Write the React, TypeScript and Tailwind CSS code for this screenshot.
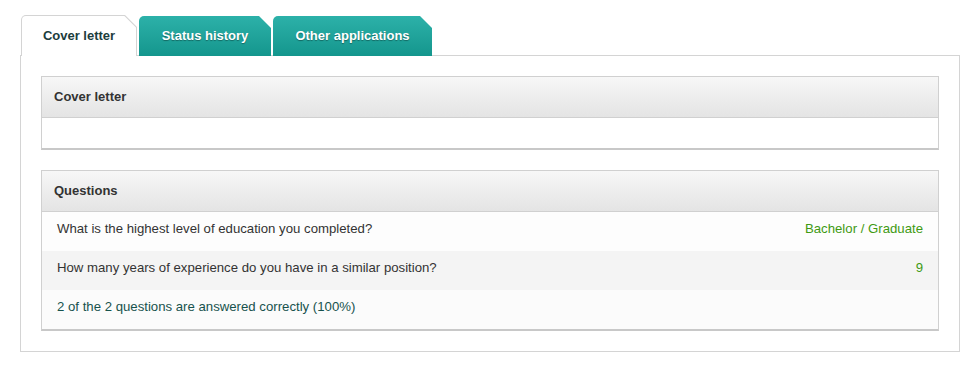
import React from 'react'

const font = { fontFamily: '"Liberation Sans", Arial, Helvetica, sans-serif' }

const tabs = [
  { label: 'Cover letter', w: 'w-[116px]', active: true },
  { label: 'Status history', w: 'w-[132px]', active: false },
  { label: 'Other applications', w: 'w-[159px]', active: false },
]

const clip = '[clip-path:polygon(0_0,calc(100%-12px)_0,100%_12px,100%_100%,0_100%)]'

function Tab({ label, w, active }: { label: string; w: string; active: boolean }) {
  if (active) {
    return (
      <div className={`${w} h-[41px] relative z-10 rounded-tl-[5px] bg-[#d4d4d4] ${clip} p-px pb-0`}>
        <div className="h-full rounded-tl-[4px] bg-white [clip-path:polygon(0_0,calc(100%-11.6px)_0,100%_11.6px,100%_100%,0_100%)] flex items-center justify-center text-[13px] font-bold text-[#1c3d3d]">
          {label}
        </div>
      </div>
    )
  }
  return (
    <div
      className={`${w} h-[40px] rounded-tl-[5px] ${clip} bg-gradient-to-b from-[#2cb1a9] to-[#13968d] flex items-center justify-center text-[13px] font-bold text-white [text-shadow:0_1px_1px_rgba(0,0,0,0.35)]`}
    >
      {label}
    </div>
  )
}

function BoxHeader({ title }: { title: string }) {
  return (
    <div className="h-[41px] flex items-center px-[12px] bg-gradient-to-b from-[#f7f7f7] to-[#e4e4e4] border-b border-[#d0d0d0] text-[13px] font-bold text-[#333]">
      {title}
    </div>
  )
}

export default function App() {
  const questions = [
    { q: 'What is the highest level of education you completed?', a: 'Bachelor / Graduate', bg: 'bg-[#fdfdfd]' },
    { q: 'How many years of experience do you have in a similar position?', a: '9', bg: 'bg-[#f4f4f4]' },
  ]

  return (
    <div style={font} className="w-[978px] h-[390px] bg-white pl-[20px] pt-[15px]">
      <div className="flex items-end gap-[2px] pl-px">
        {tabs.map((t) => (
          <Tab key={t.label} {...t} />
        ))}
      </div>
      <div className="w-[940px] h-[297px] -mt-px border border-[#d4d4d4] bg-white px-[20px] pt-[20px] flex flex-col gap-[20px]">
        {/* Cover letter */}
        <div className="border border-[#d0d0d0] border-b-[2px] border-b-[#c8c8c8]">
          <BoxHeader title="Cover letter" />
          <div className="h-[30px] bg-white" />
        </div>

        {/* Questions */}
        <div className="border border-[#d0d0d0] border-b-[2px] border-b-[#c8c8c8]">
          <BoxHeader title="Questions" />
          {questions.map((r) => (
            <div key={r.q} className={`h-[39px] flex items-center justify-between px-[15px] pb-[5px] text-[13.2px] ${r.bg}`}>
              <span className="text-[#333]">{r.q}</span>
              <span className="text-[#3f9a12]">{r.a}</span>
            </div>
          ))}
          <div className="h-[39px] flex items-center px-[15px] pb-[5px] text-[13.2px] bg-[#fbfbfb] text-[#17524d]">
            2 of the 2 questions are answered correctly (100%)
          </div>
        </div>
      </div>
    </div>
  )
}
